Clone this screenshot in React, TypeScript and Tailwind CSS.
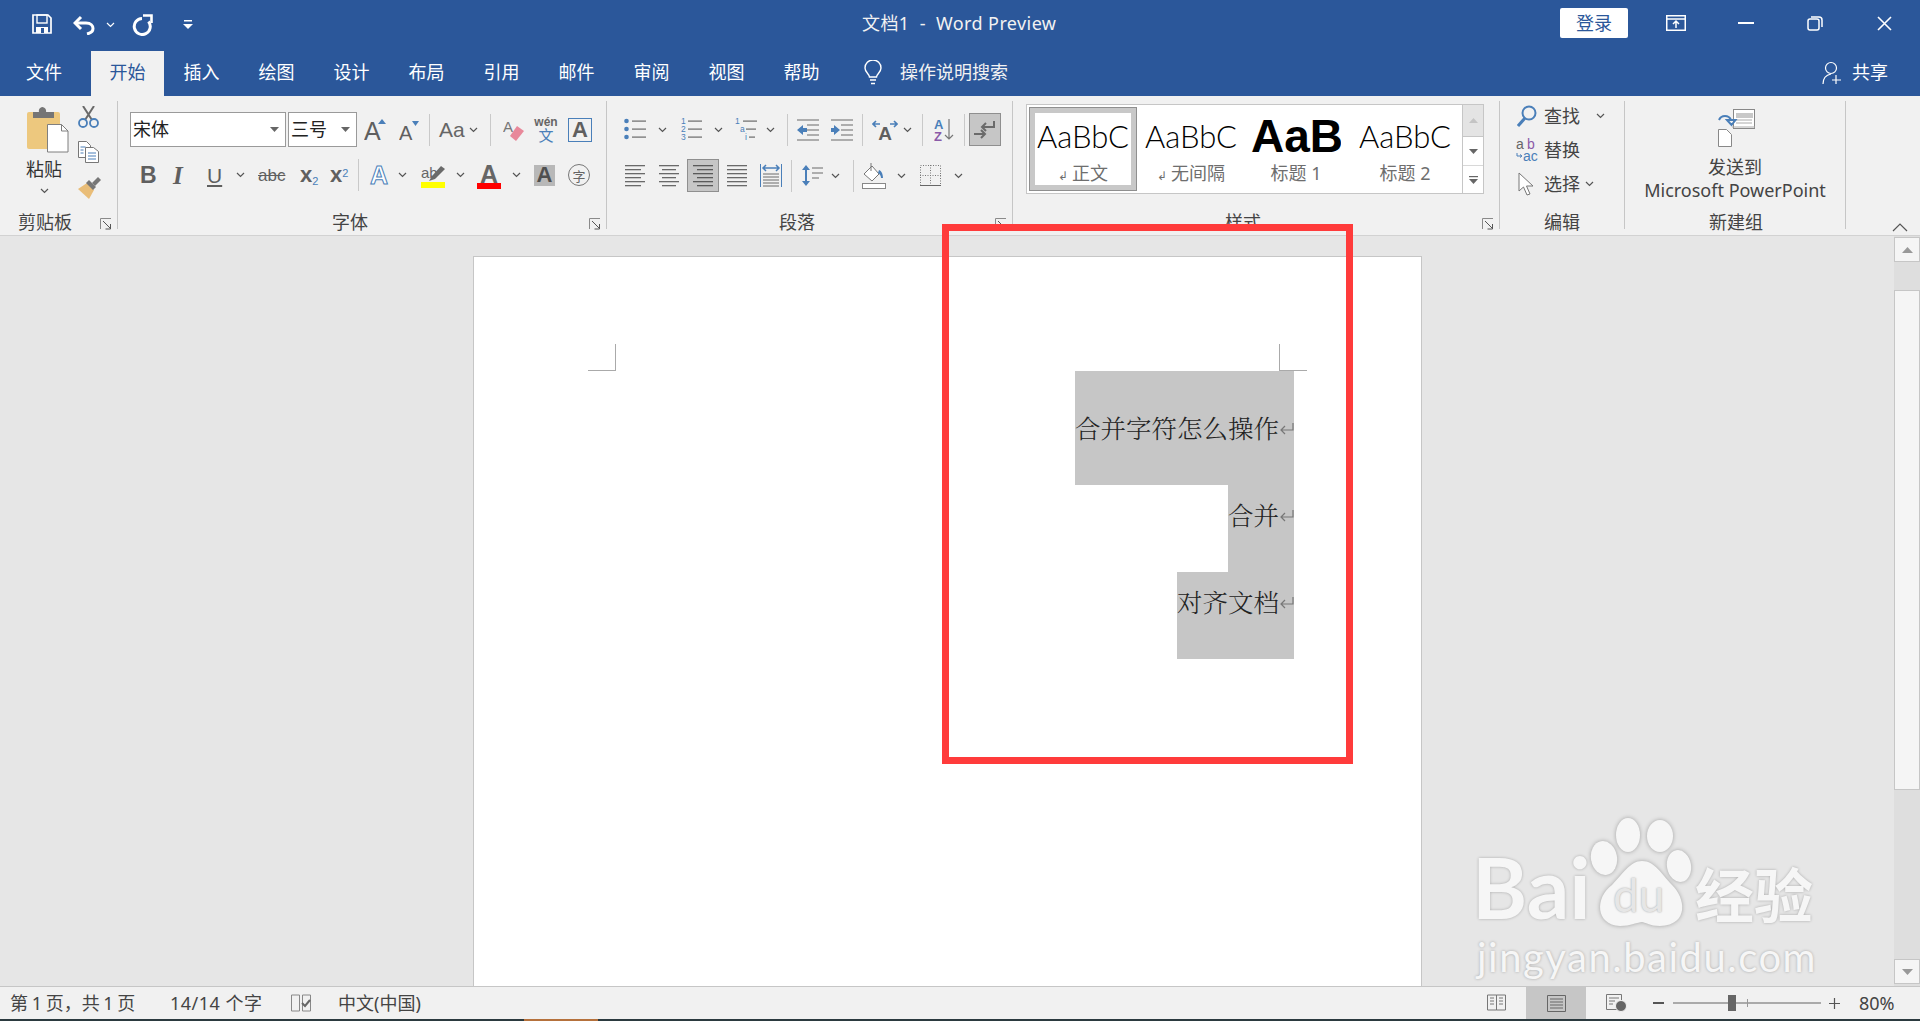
import type { ReactNode } from 'react';

const GRAY = '#5f5f5f';
const BLUE = '#4a7fb9';

function Chev({ className = '', color = '#555' }: { className?: string; color?: string }) {
  return (
    <svg width="9" height="6" viewBox="0 0 9 6" className={`shrink-0 ${className}`}>
      <path d="M1 1l3.500 3.500L8 1" fill="none" stroke={color} strokeWidth="1.200" />
    </svg>
  );
}

function Launcher({ className = '' }: { className?: string }) {
  return (
    <svg width="12" height="12" viewBox="0 0 12 12" className={`shrink-0 ${className}`}>
      <path d="M0.500 11V0.500H11" fill="none" stroke="#8a8a8a" />
      <path d="M3 3l7 7M10.500 6v5h-5" fill="none" stroke="#555" />
    </svg>
  );
}

function Divider({ className = '' }: { className?: string }) {
  return <div className={`w-px h-[32px] bg-[#c9c9c9] shrink-0 ${className}`} />;
}

function Lines({ rows, w = 20, color = '#6a6a6a' }: { rows: [number, number][]; w?: number; color?: string }) {
  return (
    <svg width={w} height="23" viewBox={`0 0 ${w} 23`} className="shrink-0">
      {rows.map(([a, b], i) => (
        <rect key={i} x={a} y={1 + i * 4} width={b - a} height="1.300" fill={color} />
      ))}
    </svg>
  );
}

function Group({ className, label, labelClass, launcher, children }: {
  className: string;
  label: string;
  labelClass: string;
  launcher?: boolean;
  children: ReactNode;
}) {
  return (
    <div className={`h-[128px] border-r border-[#c6c6c6] shrink-0 flex flex-col ${className}`}>
      <div className="h-[113px]">{children}</div>
      <div className="h-[15px] flex items-center">
        <span className={`text-[18px] leading-[22px] text-[#444] ${labelClass}`}>{label}</span>
        {launcher && <Launcher className="ml-auto mr-[5px] mt-[4px]" />}
      </div>
    </div>
  );
}

function TitleBar() {
  return (
    <div className="h-[51px] flex items-center text-white pb-[5px]">
      <div className="w-[862px] flex items-center">
        <svg width="20" height="20" viewBox="0 0 20 20" className="ml-[32px] mt-[2px]">
          <path d="M1 1h15l3 3v15H1z" fill="none" stroke="#fff" strokeWidth="1.700" />
          <rect x="5" y="1" width="10" height="8" fill="none" stroke="#fff" strokeWidth="1.400" />
          <path d="M4 19v-6h12v6" fill="#fff" />
          <rect x="9" y="14" width="3" height="5" fill="#2b579a" />
        </svg>
        <svg width="24" height="20" viewBox="0 0 24 20" className="ml-[21px] mt-[3px]">
          <path d="M8 2L2 8l6 6" fill="none" stroke="#fff" strokeWidth="3" />
          <path d="M3 8h10c5 0 7 3 7 5.500S18 18 14 19" fill="none" stroke="#fff" strokeWidth="3" />
        </svg>
        <Chev color="#fff" className="ml-[9px] mt-[3px]" />
        <svg width="22" height="22" viewBox="0 0 22 22" className="ml-[17px] mt-[3px]">
          <path d="M16.500 7.500A8 8 0 1 1 10 4.500" fill="none" stroke="#fff" strokeWidth="3" />
          <path d="M11 1.500h8.500V9" fill="none" stroke="#fff" strokeWidth="2.600" />
        </svg>
        <svg width="10" height="9" viewBox="0 0 10 9" className="ml-[29px] mt-[3px]">
          <rect x="1" y="0" width="8" height="1.500" fill="#fff" />
          <path d="M0 4h10L5 9z" fill="#fff" />
        </svg>
      </div>
      <div className="text-[18px] tracking-[0.4px] whitespace-pre text-[#f2f2f2]">文档1  -  Word Preview</div>
      <div className="ml-auto flex items-center">
        <div className="w-[68px] h-[30px] bg-white rounded-[2px] flex items-center justify-center text-[#2b579a] text-[18px]">登录</div>
        <svg width="20" height="16" viewBox="0 0 20 16" className="ml-[38px]">
          <rect x="0.750" y="0.750" width="18.500" height="14.500" fill="none" stroke="#fff" strokeWidth="1.500" />
          <path d="M1 4h18" stroke="#fff" strokeWidth="1.500" />
          <path d="M10 13V6M7 9l3-3 3 3" fill="none" stroke="#fff" strokeWidth="1.500" />
        </svg>
        <div className="ml-[52px] w-[16px] h-[2px] bg-white" />
        <svg width="16" height="16" viewBox="0 0 16 16" className="ml-[53px]">
          <rect x="1" y="4" width="11" height="11" rx="2" fill="none" stroke="#fff" strokeWidth="1.500" />
          <path d="M4 2h8a3 3 0 0 1 3 3v7" fill="none" stroke="#fff" strokeWidth="1.500" />
        </svg>
        <svg width="15" height="15" viewBox="0 0 15 15" className="ml-[54px] mr-[28px]">
          <path d="M1 1l13 13M14 1L1 14" stroke="#fff" strokeWidth="1.600" />
        </svg>
      </div>
    </div>
  );
}

function TabRow() {
  const tabs = ['插入', '绘图', '设计', '布局', '引用', '邮件', '审阅', '视图', '帮助'];
  return (
    <div className="h-[45px] flex text-white text-[18px]">
      <div className="ml-[6px] w-[76px] flex items-center justify-center pb-[2px]">文件</div>
      <div className="ml-[9px] w-[73px] flex items-center justify-center pb-[2px] bg-[#f1f1f1] text-[#2b579a]">开始</div>
      {tabs.map((t) => (
        <div key={t} className="w-[75px] flex items-center justify-center pb-[2px]">{t}</div>
      ))}
      <div className="ml-[25px] flex items-center pb-[2px]">
        <svg width="18" height="25" viewBox="0 0 18 25">
          <path d="M5.500 17c0-3-4.500-4.500-4.500-9a8 8 0 0 1 16 0c0 4.500-4.500 6-4.500 9z" fill="none" stroke="#fff" strokeWidth="1.400" />
          <path d="M6 20h6M7 23.500h4" stroke="#fff" strokeWidth="1.500" />
        </svg>
        <span className="ml-[18px] text-[#f2f2f2]">操作说明搜索</span>
      </div>
      <div className="ml-auto mr-[32px] flex items-center pb-[2px]">
        <svg width="20" height="24" viewBox="0 0 20 24">
          <circle cx="9" cy="7" r="5.500" fill="none" stroke="#fff" strokeWidth="1.200" />
          <path d="M1 23c0-5 3-9 8-10M14 14v9M10 19h9" fill="none" stroke="#fff" strokeWidth="1.200" />
        </svg>
        <span className="ml-[10px]">共享</span>
      </div>
    </div>
  );
}

function ClipboardGroup() {
  return (
    <div className="flex">
      <div className="w-[52px] ml-[18px] flex flex-col items-center">
        <svg width="42" height="46" viewBox="0 0 42 46" className="mt-[6px] ml-[8px]">
          <rect x="0" y="5" width="33" height="37" rx="2" fill="#edc87e" />
          <path d="M6 5h6a4 4 0 0 1 3-5 4 4 0 0 1 4 5h8v6H6z" fill="#757575" />
          <path d="M20.500 17.500h14l6.500 6.500v21H20.500z" fill="#fff" stroke="#7f7f7f" />
          <path d="M34.500 17.500v6.500H41" fill="none" stroke="#7f7f7f" />
        </svg>
        <div className="mt-[3px] text-[18px] leading-[26px] text-[#333]">粘贴</div>
        <Chev className="mt-[6px]" />
      </div>
      <div className="ml-[8px] flex flex-col pt-[5px]">
        <svg width="21" height="22" viewBox="0 0 21 22">
          <path d="M5 0l9 14M16 0L7 14" stroke="#6a6a6a" strokeWidth="2" />
          <circle cx="5" cy="17" r="4" fill="none" stroke={BLUE} strokeWidth="1.800" />
          <circle cx="16" cy="17" r="4" fill="none" stroke={BLUE} strokeWidth="1.800" />
        </svg>
        <svg width="21" height="22" viewBox="0 0 21 22" className="mt-[13px]">
          <path d="M0.500 0.500h8l4 4v12H0.500z" fill="#fff" stroke="#777" />
          <path d="M7.500 6.500h8l5 4v11h-13z" fill="#fff" stroke="#777" />
          <path d="M2.500 6h5M2.500 9h3M2.500 12h3M10 12h8M10 15h8M10 18h8" stroke={BLUE} />
        </svg>
        <svg width="24" height="23" viewBox="0 0 24 23" className="mt-[13px]">
          <path d="M0 13l9-6 7 7-5 9z" fill="#e9bd78" />
          <path d="M8 7l3-3 7 7-3 3z" fill="#777" />
          <path d="M14 7l6-6 3 3-6 6z" fill="#777" />
        </svg>
      </div>
    </div>
  );
}

function FontGroup() {
  return (
    <div className="pl-[12px]">
      <div className="mt-[11px] h-[35px] flex items-center">
        <div className="w-[156px] h-[35px] bg-white border border-[#9a9a9a] flex items-center justify-between pl-[2px] pr-[6px] text-[18px] text-[#222]">
          <span>宋体</span>
          <svg width="9" height="5" viewBox="0 0 9 5"><path d="M0 0h9L4.500 5z" fill="#666" /></svg>
        </div>
        <div className="ml-[2px] w-[69px] h-[35px] bg-white border border-[#9a9a9a] flex items-center justify-between pl-[2px] pr-[6px] text-[18px] text-[#222]">
          <span>三号</span>
          <svg width="9" height="5" viewBox="0 0 9 5"><path d="M0 0h9L4.500 5z" fill="#666" /></svg>
        </div>
        <svg width="22" height="24" viewBox="0 0 22 24" className="ml-[7px]">
          <text x="0" y="22" fontSize="25" fill={GRAY} fontFamily="Liberation Sans">A</text>
          <path d="M14 6l4-5 4 5z" fill={BLUE} />
        </svg>
        <svg width="20" height="20" viewBox="0 0 20 20" className="ml-[13px] mt-[2px]">
          <text x="0" y="19" fontSize="20" fill={GRAY} fontFamily="Liberation Sans">A</text>
          <path d="M13 0h7l-3.500 5z" fill={BLUE} />
        </svg>
        <Divider className="ml-[10px]" />
        <span className="ml-[9px] w-[24px] text-[21px] leading-none text-[#666] [font-family:'Liberation_Sans',sans-serif]">Aa</span>
        <Chev className="ml-[6px]" />
        <Divider className="ml-[12px]" />
        <svg width="21" height="22" viewBox="0 0 21 22" className="ml-[12px]">
          <text x="0" y="13" fontSize="15" fill="#777" fontFamily="Liberation Sans">A</text>
          <path d="M14 7l7 5-8 10-6-5z" fill="#e8889a" />
        </svg>
        <div className="ml-[11px] w-[22px] flex flex-col items-center">
          <span className="text-[12px] leading-[11px] font-bold text-[#666] [font-family:'Liberation_Sans',sans-serif]">wén</span>
          <span className="text-[15px] leading-[14px] text-[#4a7fb9]">文</span>
        </div>
        <div className="ml-[11px] w-[24px] h-[24px] border border-[#4a7fb9] flex items-center justify-center text-[22px] leading-none font-bold text-[#5f5f5f] [font-family:'Liberation_Sans',sans-serif]">A</div>
      </div>
      <div className="mt-[11px] h-[34px] flex items-center text-[#5f5f5f] [font-family:'Liberation_Sans',sans-serif]">
        <span className="ml-[10px] w-[13px] text-[23px] font-bold leading-none">B</span>
        <span className="ml-[20px] w-[12px] text-[25px] font-bold italic leading-none [font-family:'Liberation_Serif',serif]">I</span>
        <span className="ml-[22px] w-[14px] text-[21px] leading-none underline underline-offset-2">U</span>
        <Chev className="ml-[15px]" />
        <span className="ml-[13px] w-[25px] text-[17px] leading-none line-through">abc</span>
        <span className="ml-[17px] w-[16px] text-[22px] font-bold leading-none">x<sub className="text-[11px] font-normal text-[#4a7fb9]">2</sub></span>
        <span className="ml-[14px] w-[19px] text-[22px] font-bold leading-none">x<sup className="text-[11px] font-normal text-[#4a7fb9]">2</sup></span>
        <Divider className="ml-[9px]" />
        <span className="ml-[11px] w-[18px] text-[25px] font-bold leading-none text-white [-webkit-text-stroke:1px_#4a7fb9]">A</span>
        <Chev className="ml-[10px]" />
        <div className="ml-[14px] mt-[3px] w-[24px] flex flex-col">
          <svg width="24" height="17" viewBox="0 0 24 17">
            <text x="0" y="13" fontSize="15" fill="#666" fontFamily="Liberation Sans">ab</text>
            <path d="M8 16l3-5 9-10 4 3-10 10z" fill="#6a6a6a" />
          </svg>
          <div className="h-[6px] bg-[#ffff00]" />
        </div>
        <Chev className="ml-[11px]" />
        <div className="ml-[12px] mt-[3px] w-[24px] flex flex-col items-center">
          <span className="text-[25px] leading-[18px] font-bold text-[#666]">A</span>
          <div className="w-full h-[6px] bg-[#ff0000]" />
        </div>
        <Chev className="ml-[11px]" />
        <div className="ml-[13px] w-[21px] h-[21px] bg-[#b8b8b8] flex items-center justify-center text-[22px] font-bold leading-none text-[#4f4f4f]">A</div>
        <div className="ml-[13px] w-[22px] h-[22px] rounded-full border-[1.500px] border-[#777] flex items-center justify-center text-[13px] leading-none text-[#666] [font-family:'Noto_Sans_CJK_SC',sans-serif]">字</div>
      </div>
    </div>
  );
}

function Bullets({ kind }: { kind: 'dot' | 'num' | 'multi' }) {
  const marks = kind === 'num' ? ['1', '2', '3'] : kind === 'multi' ? ['1', 'a', 'i'] : [];
  return (
    <svg width="22" height="23" viewBox="0 0 22 23" className="shrink-0">
      {[3, 11, 19].map((y, i) =>
        kind === 'dot' ? (
          <circle key={y} cx="2.500" cy={y} r="2.300" fill={BLUE} />
        ) : (
          <text key={y} x={kind === 'multi' ? i * 5 : 1} y={y + 3} fontSize="8.500" fill={BLUE} fontFamily="Liberation Sans">{marks[i]}</text>
        ),
      )}
      {[3, 11, 19].map((y, i) => (
        <rect key={y} x={kind === 'multi' ? 8 + i * 3 : 8} y={y - 0.5} width={kind === 'multi' ? 14 - i * 4 : 14} height="1.200" fill="#6a6a6a" />
      ))}
    </svg>
  );
}

function Indent({ out }: { out?: boolean }) {
  return (
    <svg width="22" height="22" viewBox="0 0 22 22" className="shrink-0">
      <path d="M0 1h22M0 21h22M10 6h12M10 11h12M10 16h12" stroke="#6a6a6a" strokeWidth="1.200" />
      {out ? <path d="M0 11l6-5v3h4v4H6v3z" fill={BLUE} /> : <path d="M9 11L3 6v3H0v4h3v3z" fill={BLUE} />}
    </svg>
  );
}

function ParagraphGroup() {
  const btn = 'bg-[#c6c6c6] border border-[#8f8f8f] flex items-center justify-center shrink-0';
  return (
    <div className="pl-[17px]">
      <div className="mt-[12px] h-[33px] flex items-center">
        <Bullets kind="dot" />
        <Chev className="ml-[12px]" />
        <div className="ml-[13px]"><Bullets kind="num" /></div>
        <Chev className="ml-[12px]" />
        <div className="ml-[12px]"><Bullets kind="multi" /></div>
        <Chev className="ml-[9px]" />
        <Divider className="ml-[12px]" />
        <div className="ml-[9px]"><Indent out /></div>
        <div className="ml-[12px]"><Indent /></div>
        <Divider className="ml-[9px]" />
        <svg width="26" height="20" viewBox="0 0 26 20" className="ml-[9px] shrink-0">
          <path d="M1 4h7M4 1L1 4l3 3M25 4h-7M22 1l3 3-3 3" fill="none" stroke={BLUE} strokeWidth="1.600" />
          <text x="13" y="20" fontSize="19" fontWeight="bold" fill={GRAY} textAnchor="middle" fontFamily="Liberation Sans">A</text>
        </svg>
        <Chev className="ml-[5px]" />
        <Divider className="ml-[10px]" />
        <svg width="20" height="24" viewBox="0 0 20 24" className="ml-[11px] shrink-0">
          <text x="0" y="11" fontSize="13" fontWeight="bold" fill={BLUE} fontFamily="Liberation Sans">A</text>
          <text x="0" y="23" fontSize="13" fontWeight="bold" fill="#8a5aa8" fontFamily="Liberation Sans">Z</text>
          <path d="M15 1v20M11 17l4 4 4-4" fill="none" stroke="#777" strokeWidth="1.200" />
        </svg>
        <Divider className="ml-[10px]" />
        <div className={`ml-[4px] w-[32px] h-[33px] ${btn}`}>
          <svg width="22" height="20" viewBox="0 0 22 20">
            <path d="M20 1v6H9M12 3L8 7l4 4" fill="none" stroke="#6a6a6a" strokeWidth="2" />
            <path d="M0 14h10M7 10l4 4-4 4" fill="none" stroke="#6a6a6a" strokeWidth="2" />
          </svg>
        </div>
      </div>
      <div className="mt-[13px] h-[33px] flex items-center">
        <div className="ml-[1px]"><Lines rows={[[0, 20], [0, 16], [0, 20], [0, 16], [0, 20], [0, 16]]} /></div>
        <div className="ml-[14px]"><Lines rows={[[0, 20], [3, 17], [0, 20], [3, 17], [0, 20], [3, 17]]} /></div>
        <div className={`ml-[8px] w-[32px] h-[33px] ${btn}`}>
          <Lines rows={[[0, 20], [4, 20], [0, 20], [4, 20], [0, 20], [4, 20]]} w={20} color="#5a5a5a" />
        </div>
        <div className="ml-[8px]"><Lines rows={[[0, 20], [0, 20], [0, 20], [0, 20], [0, 20], [0, 20]]} /></div>
        <svg width="22" height="23" viewBox="0 0 22 23" className="ml-[13px] shrink-0">
          <path d="M0.500 0v23M21.500 0v23" stroke={BLUE} />
          <path d="M3 4h16M6 1L3 4l3 3M16 1l3 3-3 3" fill="none" stroke={BLUE} strokeWidth="1.500" />
          <path d="M3 10h16M3 13h16M3 16h16M3 19h16M3 22h16" stroke="#6a6a6a" />
        </svg>
        <Divider className="ml-[9px]" />
        <svg width="22" height="23" viewBox="0 0 22 23" className="ml-[9px] shrink-0">
          <path d="M5 1l4 5H6v11h3l-4 5-4-5h3V6H1z" fill={BLUE} />
          <path d="M11 4h11M11 9h11M11 14h7" stroke="#6a6a6a" strokeWidth="1.200" />
        </svg>
        <Chev className="ml-[8px]" />
        <Divider className="ml-[13px]" />
        <svg width="24" height="26" viewBox="0 0 24 26" className="ml-[8px] shrink-0">
          <path d="M2 11l8-8 7 8-7 7z" fill="#fff" stroke="#777" />
          <path d="M9 0v8" stroke="#777" />
          <path d="M17 7c3 1 4 5 4 8h-2c0-2-1-4-3-5z" fill={BLUE} />
          <rect x="0.500" y="20.500" width="23" height="5" fill="#fff" stroke="#888" />
        </svg>
        <Chev className="ml-[11px]" />
        <svg width="21" height="21" viewBox="0 0 21 21" className="ml-[14px] shrink-0">
          <rect x="0.500" y="0.500" width="20" height="20" fill="none" stroke="#777" strokeDasharray="1 1.500" />
          <path d="M10.500 0v21M0 10.500h21" stroke="#777" strokeDasharray="1 1.500" />
          <path d="M0 20.500h21" stroke="#666" />
        </svg>
        <Chev className="ml-[13px]" />
      </div>
    </div>
  );
}

function StyleItem({ sample, label, mark, cls }: { sample: string; label: string; mark?: boolean; cls: string }) {
  return (
    <div className={`shrink-0 flex flex-col items-center overflow-hidden ${cls}`}>
      <div className="h-[46px] w-full overflow-hidden flex items-center justify-center whitespace-nowrap">{sample}</div>
      <div className="mt-[3px] text-[18px] leading-[22px] font-normal text-[#6e6e6e] whitespace-nowrap [font-family:'Noto_Sans','Noto_Sans_CJK_SC',sans-serif]">
        {mark && <span className="text-[12px] mr-[4px]">↲</span>}
        {label}
      </div>
    </div>
  );
}

function StylesGroup() {
  const light = "text-[31px] font-light text-black [font-family:'Lato',sans-serif]";
  return (
    <div className="ml-[13px] mt-[3px] w-[458px] h-[90px] flex bg-white border border-[#c6c6c6]">
      <div className="m-[2px] mr-0 w-[108px] h-[84px] border border-[#8f8f8f] bg-[#c8c8c8] p-[5px] shrink-0">
        <div className={`${light} h-[72px] w-[96px] bg-white`}>
          <StyleItem sample="AaBbC" label="正文" mark cls="w-[96px]" />
        </div>
      </div>
      <div className={`${light} w-[108px] pt-[8px] shrink-0`}>
        <StyleItem sample="AaBbC" label="无间隔" mark cls="w-[108px]" />
      </div>
      <div className="w-[90px] ml-[6px] pt-[8px] shrink-0 text-[46px] font-bold text-black [font-family:'Liberation_Sans',sans-serif]">
        <StyleItem sample="AaBbC" label="标题 1" cls="w-[90px] [&>div:first-child]:justify-start" />
      </div>
      <div className={`${light} w-[92px] ml-[18px] pt-[8px] shrink-0`}>
        <StyleItem sample="AaBbC" label="标题 2" cls="w-[92px]" />
      </div>
      <div className="ml-auto w-[21px] flex flex-col border-l border-[#c6c6c6]">
        <div className="h-[32px] bg-[#e4e4e4] flex items-center justify-center border-b border-[#c6c6c6]">
          <svg width="9" height="5" viewBox="0 0 9 5"><path d="M0 5h9L4.500 0z" fill="#c4c4c4" /></svg>
        </div>
        <div className="h-[29px] flex items-center justify-center border-b border-[#d8d8d8]">
          <svg width="9" height="5" viewBox="0 0 9 5"><path d="M0 0h9L4.500 5z" fill="#666" /></svg>
        </div>
        <div className="flex-1 flex items-center justify-center">
          <svg width="9" height="8" viewBox="0 0 9 8"><rect y="0" width="9" height="1.200" fill="#666" /><path d="M0 3h9L4.500 8z" fill="#666" /></svg>
        </div>
      </div>
    </div>
  );
}

function EditGroup() {
  return (
    <div className="text-[18px] text-[#444] mt-[-2px]">
      <div className="h-[34px] flex items-center pl-[17px]">
        <svg width="20" height="22" viewBox="0 0 20 22">
          <circle cx="12" cy="8" r="6.500" fill="none" stroke={BLUE} strokeWidth="2" />
          <path d="M8 13l-7 8" stroke={BLUE} strokeWidth="3" />
        </svg>
        <span className="ml-[7px]">查找</span>
        <Chev className="ml-[16px]" />
      </div>
      <div className="h-[34px] flex items-center pl-[16px]">
        <svg width="23" height="24" viewBox="0 0 23 24">
          <text x="0" y="11" fontSize="14" fill="#666" fontFamily="Liberation Sans">a</text>
          <text x="11" y="11" fontSize="14" fill="#8a5aa8" fontFamily="Liberation Sans">b</text>
          <text x="7" y="23" fontSize="14" fill={BLUE} fontFamily="Liberation Sans">ac</text>
          <path d="M1 15v3h4M4 16.500L6 18l-2 1.500" fill="none" stroke={BLUE} />
        </svg>
        <span className="ml-[5px]">替换</span>
      </div>
      <div className="h-[34px] flex items-center pl-[18px]">
        <svg width="16" height="25" viewBox="0 0 16 25">
          <path d="M1 1v18l4.500-4 3.500 8 3-1-3.500-8H15z" fill="#fff" stroke="#777" />
        </svg>
        <span className="ml-[10px]">选择</span>
        <Chev className="ml-[5px]" />
      </div>
    </div>
  );
}

function NewGroup() {
  return (
    <div className="flex flex-col items-center text-[18px] text-[#444]">
      <svg width="37" height="38" viewBox="0 0 37 38" className="mt-[8px] ml-[2px]">
        <rect x="15.500" y="0.500" width="21" height="19" fill="#fff" stroke="#888" />
        <rect x="18" y="4" width="17" height="5" fill="#c8c8c8" />
        <path d="M18 11h16M18 14h16M14 18h23" stroke="#aaa" />
        <path d="M0.500 20.500h8l5 5v12H0.500z" fill="#fff" stroke="#888" />
        <path d="M1 11a6.500 6.500 0 0 1 12 0M9 11l4.500 5 4-5z" fill="none" stroke={BLUE} strokeWidth="2" />
      </svg>
      <div className="mt-[9px] leading-[23px]">发送到</div>
      <div className="leading-[23px] whitespace-nowrap">Microsoft PowerPoint</div>
    </div>
  );
}

function Ribbon() {
  return (
    <div className="h-[140px] bg-[#f1f1f1] border-b border-[#d2d2d2] pt-[5px] flex">
      <Group className="w-[118px]" label="剪贴板" labelClass="pl-[18px]" launcher>
        <ClipboardGroup />
      </Group>
      <Group className="w-[489px]" label="字体" labelClass="pl-[214px]" launcher>
        <FontGroup />
      </Group>
      <Group className="w-[406px]" label="段落" labelClass="pl-[172px]" launcher>
        <ParagraphGroup />
      </Group>
      <Group className="w-[487px]" label="样式" labelClass="pl-[212px]" launcher>
        <StylesGroup />
      </Group>
      <Group className="w-[125px]" label="编辑" labelClass="pl-[44px]">
        <EditGroup />
      </Group>
      <Group className="w-[221px]" label="新建组" labelClass="pl-[84px]">
        <NewGroup />
      </Group>
      <div className="flex-1 flex justify-end items-end pr-[12px] pb-[3px]">
        <svg width="16" height="9" viewBox="0 0 16 9"><path d="M1 8l7-7 7 7" fill="none" stroke="#555" strokeWidth="1.200" /></svg>
      </div>
    </div>
  );
}

function DocLine({ text, cls }: { text: string; cls: string }) {
  return (
    <div className={`bg-[#c6c6c6] flex items-start justify-end text-[25.500px] leading-[26px] text-[#222] ${cls}`}>
      <span className="[font-family:'Noto_Serif_CJK_SC','Noto_Sans_CJK_SC',serif] font-light whitespace-nowrap">{text}</span>
      <svg width="15" height="14" viewBox="0 0 15 14" className="shrink-0 mt-[8px]">
        <path d="M14 1v7H2M6 4L2 8l4 4" fill="none" stroke="#777" strokeWidth="1.200" />
      </svg>
    </div>
  );
}

function Page() {
  return (
    <div className="relative w-[949px] h-[780px] bg-white border-x border-t border-[#c6c6c6] pt-[114px] pr-[127px] flex flex-col items-end">
      <div className="absolute left-[114px] top-[87px] w-[28px] h-[27px] border-r border-b border-[#aaa]" />
      <div className="absolute left-[805px] top-[87px] w-[28px] h-[27px] border-l border-b border-[#aaa]" />
      <DocLine text="合并字符怎么操作" cls="w-[219px] h-[114px] pt-[43px]" />
      <DocLine text="合并" cls="w-[66px] h-[87px] pt-[16px]" />
      <DocLine text="对齐文档" cls="w-[117px] h-[87px] pt-[16px]" />
    </div>
  );
}

function Scrollbar() {
  return (
    <div className="w-[26px] bg-[#dedede] flex flex-col pt-[1px]">
      <div className="h-[25px] bg-[#f5f5f5] border border-[#c6c6c6] flex items-center justify-center shrink-0">
        <svg width="11" height="6" viewBox="0 0 11 6"><path d="M0 6h11L5.500 0z" fill="#999" /></svg>
      </div>
      <div className="h-[28px] shrink-0" />
      <div className="h-[500px] bg-[#f5f5f5] border border-[#c6c6c6] shrink-0" />
      <div className="mt-auto mb-[2px] h-[25px] bg-[#f5f5f5] border border-[#c6c6c6] flex items-center justify-center shrink-0">
        <svg width="11" height="6" viewBox="0 0 11 6"><path d="M0 0h11L5.500 6z" fill="#999" /></svg>
      </div>
    </div>
  );
}

function StatusBar() {
  return (
    <div className="h-[33px] shrink-0 bg-[#f1f1f1] border-t border-[#c6c6c6] flex items-center text-[18px] text-[#444]">
      <span className="ml-[10px] w-[132px] whitespace-nowrap [word-spacing:-1px]">第 1 页，共 1 页</span>
      <span className="ml-[28px] w-[94px] whitespace-nowrap tracking-[0.5px]">14/14 个字</span>
      <svg width="20" height="20" viewBox="0 0 20 20" className="ml-[27px]">
        <path d="M0.500 2h8v16h-8zM11.500 2h8v16h-8z" fill="none" stroke="#888" />
        <path d="M11 10l3 3 5-6" fill="none" stroke="#666" strokeWidth="2" />
      </svg>
      <span className="ml-[27px] w-[82px] whitespace-nowrap">中文(中国)</span>
      <svg width="20" height="18" viewBox="0 0 20 18" className="ml-[1067px]">
        <path d="M0.500 1h9v15h-9zM9.500 1h9v15h-9zM3 4h4M3 7h4M3 10h4M12 4h4M12 7h4M12 10h4" fill="none" stroke="#777" />
      </svg>
      <div className="ml-[19px] w-[60px] self-stretch bg-[#c6c6c6] flex items-center justify-center">
        <svg width="19" height="17" viewBox="0 0 19 17">
          <path d="M0.500 0.500h18v16h-18zM3 4h13M3 7h13M3 10h13M3 13h13" fill="none" stroke="#666" />
        </svg>
      </div>
      <svg width="21" height="18" viewBox="0 0 21 18" className="ml-[20px]">
        <path d="M0.500 0.500h15v15h-15zM3 4h10M3 7h6M3 10h4" fill="none" stroke="#777" />
        <circle cx="15" cy="12" r="5.500" fill="#666" stroke="#f1f1f1" />
      </svg>
      <div className="ml-[26px] w-[11px] h-[1.500px] bg-[#555]" />
      <div className="ml-[9px] w-[148px] h-[2px] bg-[#aaa] relative">
        <div className="absolute left-[55px] top-[-7px] w-[8px] h-[16px] bg-[#666]" />
        <div className="absolute left-[74px] top-[-3px] w-px h-[8px] bg-[#999]" />
      </div>
      <svg width="11" height="11" viewBox="0 0 11 11" className="ml-[8px]">
        <path d="M5.500 0v11M0 5.500h11" stroke="#555" strokeWidth="1.200" />
      </svg>
      <span className="ml-[19px] whitespace-nowrap">80%</span>
    </div>
  );
}

function Watermark() {
  const mark = '[text-shadow:0_0_3px_rgba(0,0,0,0.28)] text-[#f6f6f6]';
  return (
    <div className="absolute left-[1470px] top-[815px] w-[360px] h-[170px] pointer-events-none">
      <span className={`absolute left-[2px] top-[30px] text-[84px] leading-none font-bold [font-family:'Lato',sans-serif] ${mark}`}>Bai</span>
      <svg width="110" height="120" viewBox="1590 815 110 120" className="absolute left-[120px] top-0 drop-shadow-[0_0_2px_rgba(0,0,0,0.3)]">
        <g fill="#f6f6f6">
          <ellipse cx="1628" cy="835" rx="12" ry="17" />
          <ellipse cx="1660" cy="836" rx="13" ry="16" />
          <ellipse cx="1604" cy="858" rx="13" ry="17" transform="rotate(-10 1604 858)" />
          <ellipse cx="1679" cy="866" rx="12" ry="16" transform="rotate(-10 1679 866)" />
          <path d="M1642 861c13 0 20 14 30 24 13 12 18 40-12 41-10 0-15-4-18-4-4 0-12 4-22 4-25-1-25-29-8-41 10-10 18-24 30-24z" />
        </g>
      </svg>
      <span className="absolute left-[143px] top-[57px] text-[46px] leading-none [font-family:'Lato',sans-serif] text-[#e6e6e6] [text-shadow:0_0_2px_rgba(0,0,0,0.35)]">du</span>
      <span className={`absolute left-[225px] top-[48px] text-[59px] leading-none font-bold whitespace-nowrap [font-family:'Noto_Sans_CJK_SC',sans-serif] ${mark}`}>经验</span>
      <span className={`absolute left-[7px] top-[122px] text-[40px] leading-none tracking-[1.500px] whitespace-nowrap [font-family:'Lato',sans-serif] ${mark}`}>jingyan.baidu.com</span>
    </div>
  );
}

export default function App() {
  return (
    <div className="relative w-[1920px] h-[1021px] overflow-hidden flex flex-col bg-[#2b579a] [font-family:'Noto_Sans','Noto_Sans_CJK_SC',sans-serif]">
      <TitleBar />
      <TabRow />
      <Ribbon />
      <div className="flex-1 min-h-0 flex bg-[#e6e6e6]">
        <div className="flex-1 min-w-0 pl-[473px] pt-[20px] overflow-hidden">
          <Page />
        </div>
        <Scrollbar />
      </div>
      <StatusBar />
      <div className="h-[2px] shrink-0 flex bg-[#2b3a3f]">
        <div className="ml-[524px] w-[74px] bg-[#b5713c]" />
      </div>
      <Watermark />
      <div className="absolute left-[942px] top-[224px] w-[411px] h-[540px] border-[7px] border-[#ff3b3b]" />
    </div>
  );
}
